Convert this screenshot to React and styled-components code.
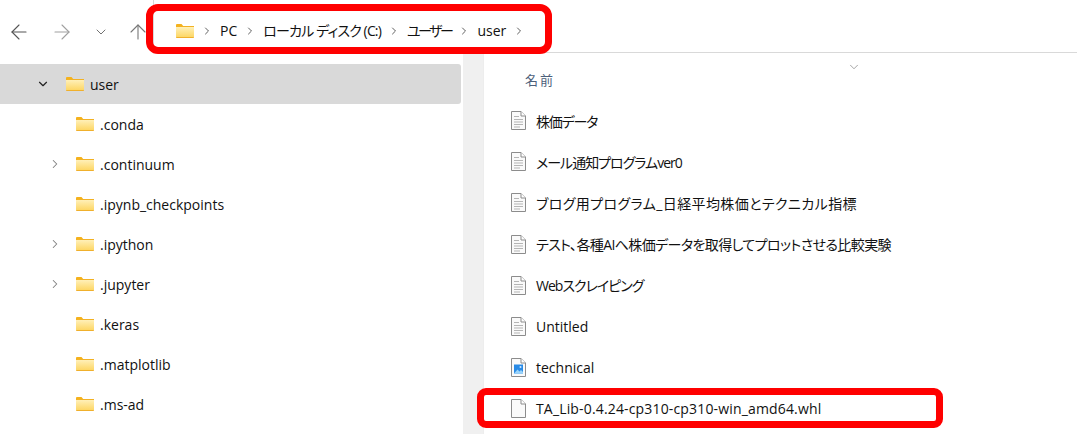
import React from "react";
import styled, { createGlobalStyle } from "styled-components";
import { ArrowLeft, ArrowRight, ArrowUp, ChevronDown, ChevronRight } from "lucide-react";

const GlobalStyle = createGlobalStyle`
  html, body {
    margin: 0;
    background: #fff;
    overflow: hidden;
  }
  * {
    box-sizing: border-box;
  }
`;

const Window = styled.div`
  position: relative;
  width: 1077px;
  height: 434px;
  overflow: hidden;
  font-family: "Open Sans", "Noto Sans CJK JP", sans-serif;
  font-size: 14px;
  font-feature-settings: "palt";
  color: #111;
  background: #fff;
`;

const Toolbar = styled.div`
  height: 53px;
  display: flex;
  align-items: flex-start;
`;

const NavButtons = styled.div`
  width: 153px;
  flex: none;
  display: flex;
  align-items: center;
  height: 53px;
  padding: 10px 0 0 7px;
`;

const NavButton = styled.span`
  flex: none;
  display: flex;
  justify-content: center;
  width: ${(p) => p.$w}px;
  color: ${(p) => p.$color};
`;

const AddressBar = styled.div`
  flex: 1;
  height: 53px;
  padding: 11px 0 0 22px;
  display: flex;
  align-items: flex-start;
  border-left: 1px solid #d9d9d9;
  border-bottom: 1px solid #d9d9d9;
`;

const Crumbs = styled.div`
  height: 40px;
  display: flex;
  align-items: center;
`;

const Crumb = styled.span`
  margin: 0 7px 2px 7px;
  letter-spacing: ${(p) => p.$track}px;
  white-space: nowrap;
`;

const Separator = styled(ChevronRight)`
  color: #5f5f5f;
  flex: none;
`;

const Body = styled.div`
  display: flex;
  height: 381px;
`;

const Sidebar = styled.div`
  width: 463px;
  flex: none;
  padding-top: 11px;
`;

const TreeRow = styled.div`
  height: 40px;
  display: flex;
  align-items: center;
  width: 461px;
  padding-left: ${(p) => (p.$selected ? 36 : 46)}px;
  background: ${(p) => (p.$selected ? "#d9d9d9" : "transparent")};
  border-radius: 0 3px 3px 0;
`;

const Twisty = styled.span`
  width: 30px;
  flex: none;
  display: flex;
  padding-left: ${(p) => (p.$open ? 0 : 2)}px;
  color: ${(p) => (p.$open ? "#222" : "#808080")};
`;

const FolderName = styled.span`
  margin-left: 6px;
  white-space: nowrap;
`;

const ScrollTrack = styled.div`
  width: 20px;
  flex: none;
  background: #f0f0f0;
`;

const FileList = styled.div`
  flex: 1;
  border-left: 1px solid #ededed;
`;

const ListHeader = styled.div`
  position: relative;
  height: 47px;
  padding: 17px 0 0 41px;
  font-size: 13px;
  line-height: 20px;
  color: #4c607a;
  letter-spacing: 2px;
`;

const SortChevron = styled(ChevronDown)`
  position: absolute;
  left: 363px;
  top: 7px;
  color: #666;
`;

const FileRow = styled.div`
  height: 41.2px;
  display: flex;
  align-items: center;
  padding-left: 27px;
`;

const FileName = styled.span`
  margin-left: 10px;
  letter-spacing: ${(p) => p.$track}px;
  white-space: nowrap;
`;

// red annotation boxes drawn over the screenshot
const Highlight = styled.div`
  position: absolute;
  left: ${(p) => p.$left}px;
  top: ${(p) => p.$top}px;
  width: ${(p) => p.$width}px;
  height: ${(p) => p.$height}px;
  border: ${(p) => p.$border}px solid #ff0000;
  border-radius: ${(p) => p.$radius}px;
`;

const FolderIcon = () => (
  <svg width="18" height="14" viewBox="0 0 18 14" style={{ flex: "none" }}>
    <defs>
      <linearGradient id="fold" x1="0" y1="0" x2="0" y2="1">
        <stop offset="0" stopColor="#fff0b8" />
        <stop offset="1" stopColor="#fdd766" />
      </linearGradient>
    </defs>
    <path d="M0 1.200C0 .5.5 0 1.200 0h4.300l1.700 2H18v2H0z" fill="#f5b21c" />
    <rect x="0" y="2.500" width="18" height="11.500" rx="0.800" fill="#f0b02c" />
    <rect x="0" y="3" width="18" height="10" fill="url(#fold)" />
  </svg>
);

const DocIcon = ({ lines, picture }) => (
  <svg width="15" height="19" viewBox="0 0 15 19" style={{ flex: "none" }}>
    <path d="M.5.5h9.500l4.500 4.500v13.500H.5z" fill="#fafafa" stroke="#8c8c8c" />
    <path d="M10 .5v4.500h4.500" fill="#fff" stroke="#8c8c8c" />
    {lines && (
      <path
        d="M3 5.500h5M3 8.500h9M3 11h9M3 13.500h9M3 16h6"
        stroke="#b5b5b5"
        strokeWidth="1"
        fill="none"
      />
    )}
    {picture && (
      <g>
        <rect x="3" y="6.500" width="9" height="9" fill="#2a8be6" />
        <path d="M3 15.500l3.500-4 2 2 1.500-1.500 2 2v1.500z" fill="#9ad4fa" />
        <circle cx="9.500" cy="9" r="1" fill="#cfeaff" />
      </g>
    )}
  </svg>
);

const crumbs = [
  { name: "PC", track: 0 },
  { name: "ローカル ディスク (C:)", track: -0.85 },
  { name: "ユーザー", track: -2.5 },
  { name: "user", track: 0 },
];

const folders = [
  { name: ".conda" },
  { name: ".continuum", more: true },
  { name: ".ipynb_checkpoints" },
  { name: ".ipython", more: true },
  { name: ".jupyter", more: true },
  { name: ".keras" },
  { name: ".matplotlib" },
  { name: ".ms-ad" },
];

const files = [
  { name: "株価データ", lines: true, track: -1.2 },
  { name: "メール通知プログラムver0", lines: true, track: -1 },
  { name: "ブログ用プログラム_日経平均株価とテクニカル指標", lines: true, track: 0.4 },
  { name: "テスト、各種AIへ株価データを取得してプロットさせる比較実験", lines: true, track: -0.6 },
  { name: "Webスクレイピング", lines: true, track: -1 },
  { name: "Untitled", lines: true, track: 0 },
  { name: "technical", picture: true, track: 0 },
  { name: "TA_Lib-0.4.24-cp310-cp310-win_amd64.whl", track: 0.16 },
];

const App = () => {
  return (
    <Window>
      <GlobalStyle />
      <Toolbar>
        <NavButtons>
          <NavButton $w={24} $color="#555">
            <ArrowLeft size={24} strokeWidth={1.1} />
          </NavButton>
          <NavButton $w={62} $color="#a0a0a0">
            <ArrowRight size={24} strokeWidth={1.1} />
          </NavButton>
          <NavButton $w={16} $color="#666">
            <ChevronDown size={18} strokeWidth={1.4} />
          </NavButton>
          <NavButton $w={58} $color="#777">
            <ArrowUp size={24} strokeWidth={1.1} />
          </NavButton>
        </NavButtons>
        <AddressBar>
          <Crumbs>
            <FolderIcon />
            <Separator size={12} strokeWidth={2} style={{ marginLeft: 7 }} />
            {crumbs.map((c) => (
              <React.Fragment key={c.name}>
                <Crumb $track={c.track}>{c.name}</Crumb>
                <Separator size={12} strokeWidth={2} />
              </React.Fragment>
            ))}
          </Crumbs>
        </AddressBar>
      </Toolbar>
      <Body>
        <Sidebar>
          <TreeRow $selected>
            <Twisty $open>
              <ChevronDown size={14} strokeWidth={2} />
            </Twisty>
            <FolderIcon />
            <FolderName>user</FolderName>
          </TreeRow>
          {folders.map((f) => (
            <TreeRow key={f.name}>
              <Twisty>{f.more && <ChevronRight size={14} strokeWidth={1.8} />}</Twisty>
              <FolderIcon />
              <FolderName>{f.name}</FolderName>
            </TreeRow>
          ))}
        </Sidebar>
        <ScrollTrack />
        <FileList>
          <ListHeader>
            名前
            <SortChevron size={14} strokeWidth={1} />
          </ListHeader>
          {files.map((f) => (
            <FileRow key={f.name}>
              <DocIcon lines={f.lines} picture={f.picture} />
              <FileName $track={f.track}>{f.name}</FileName>
            </FileRow>
          ))}
        </FileList>
      </Body>
      <Highlight $left={146} $top={4} $width={406} $height={50} $border={7} $radius={12} />
      <Highlight $left={477} $top={388} $width={466} $height={40} $border={7} $radius={9} />
    </Window>
  );
};

export default App;
